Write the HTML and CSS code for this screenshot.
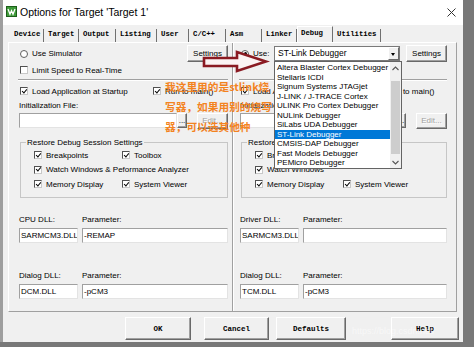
FILE: index.html
```html
<!DOCTYPE html>
<html>
<head>
	<meta charset="UTF-8">
	<title>Options for Target 'Target 1'</title>
	<link rel="stylesheet" href="styles.css">
</head>
<body>
<div class="window">

	<div class="titlebar">
		<svg class="app-icon" width="11" height="11" viewBox="0 0 11 11">
			<rect x="0.5" y="0.5" width="10" height="10" fill="#3f9b3a" stroke="#1d5e1a"/>
			<path d="M2 3 L4 8.2 L5.5 4.6 L7 8.2 L9 3" fill="none" stroke="#fff" stroke-width="1.3"/>
		</svg>
		<span class="title">Options for Target 'Target 1'</span>
		<svg class="close" width="9" height="9" viewBox="0 0 9 9">
			<path d="M0.5 0.5 L8.5 8.5 M8.5 0.5 L0.5 8.5" stroke="#333" stroke-width="1"/>
		</svg>
	</div>

	<div class="tabs">
		<span class="tab">Device</span>
		<span class="tab">Target</span>
		<span class="tab">Output</span>
		<span class="tab">Listing</span>
		<span class="tab">User</span>
		<span class="tab">C/C++</span>
		<span class="tab">Asm</span>
		<span class="tab">Linker</span>
		<span class="tab active">Debug</span>
		<span class="tab">Utilities</span>
	</div>

	<div class="panel">

		<!-- simulator side -->
		<div class="col col-left">
			<div class="row row-top">
				<label class="opt"><span class="radio"></span>Use Simulator</label>
				<button class="btn btn-settings">Settings</button>
			</div>
			<div class="row row-limit">
				<label class="opt"><span class="cb"></span>Limit Speed to Real-Time</label>
			</div>
			<div class="sep"></div>
			<div class="row row-load">
				<label class="opt opt-load"><span class="cb on"></span>Load Application at Startup</label>
				<label class="opt"><span class="cb on"></span>Run to main()</label>
			</div>
			<div class="row caption">Initialization File:</div>
			<div class="row row-init">
				<span class="field"></span>
				<button class="btn btn-dots">...</button>
				<button class="btn btn-edit">Edit...</button>
			</div>
			<fieldset class="group">
				<legend>Restore Debug Session Settings</legend>
				<div class="group-grid">
					<label class="opt"><span class="cb on"></span>Breakpoints</label>
					<label class="opt"><span class="cb on"></span>Toolbox</label>
					<label class="opt wide"><span class="cb on"></span>Watch Windows &amp; Peformance Analyzer</label>
					<label class="opt"><span class="cb on"></span>Memory Display</label>
					<label class="opt"><span class="cb on"></span>System Viewer</label>
				</div>
			</fieldset>
			<div class="dll dll-first">
				<span>CPU DLL:</span><span>Parameter:</span>
				<span class="field">SARMCM3.DLL</span><span class="field">-REMAP</span>
			</div>
			<div class="dll">
				<span>Dialog DLL:</span><span>Parameter:</span>
				<span class="field">DCM.DLL</span><span class="field">-pCM3</span>
			</div>
		</div>

		<!-- target side -->
		<div class="col col-right">
			<div class="row row-top">
				<label class="opt opt-use"><span class="radio on"></span>Use:</label>
				<div class="combo">
					<span class="combo-text">ST-Link Debugger</span>
					<span class="combo-btn"></span>
					<div class="droplist">
						<div class="items">
							<div class="item">Altera Blaster Cortex Debugger</div>
							<div class="item">Stellaris ICDI</div>
							<div class="item">Signum Systems JTAGjet</div>
							<div class="item">J-LINK / J-TRACE Cortex</div>
							<div class="item">ULINK Pro Cortex Debugger</div>
							<div class="item">NULink Debugger</div>
							<div class="item">SiLabs UDA Debugger</div>
							<div class="item sel">ST-Link Debugger</div>
							<div class="item">CMSIS-DAP Debugger</div>
							<div class="item">Fast Models Debugger</div>
							<div class="item">PEMicro Debugger</div>
						</div>
						<div class="scroll">
							<svg class="chev chev-up" width="7" height="5" viewBox="0 0 7 5"><path d="M0.5 4 L3.5 1 L6.5 4" fill="none" stroke="#555" stroke-width="1.1"/></svg>
							<span class="thumb"></span>
							<svg class="chev chev-down" width="7" height="5" viewBox="0 0 7 5"><path d="M0.5 1 L3.5 4 L6.5 1" fill="none" stroke="#555" stroke-width="1.1"/></svg>
						</div>
					</div>
				</div>
				<button class="btn btn-settings">Settings</button>
			</div>
			<div class="row row-limit"></div>
			<div class="sep"></div>
			<div class="row row-load">
				<label class="opt opt-load"><span class="cb on"></span>Load Application at Startup</label>
				<label class="opt"><span class="cb on"></span>Run to main()</label>
			</div>
			<div class="row caption">Initialization File:</div>
			<div class="row row-init">
				<span class="field"></span>
				<button class="btn btn-dots">...</button>
				<button class="btn btn-edit">Edit...</button>
			</div>
			<fieldset class="group">
				<legend>Restore Debug Session Settings</legend>
				<div class="group-grid">
					<label class="opt"><span class="cb on"></span>Breakpoints</label>
					<label class="opt"><span class="cb on"></span>Toolbox</label>
					<label class="opt wide"><span class="cb on"></span>Watch Windows</label>
					<label class="opt"><span class="cb on"></span>Memory Display</label>
					<label class="opt"><span class="cb on"></span>System Viewer</label>
				</div>
			</fieldset>
			<div class="dll dll-first">
				<span>Driver DLL:</span><span>Parameter:</span>
				<span class="field">SARMCM3.DLL</span><span class="field"></span>
			</div>
			<div class="dll">
				<span>Dialog DLL:</span><span>Parameter:</span>
				<span class="field">TCM.DLL</span><span class="field">-pCM3</span>
			</div>
		</div>

		<!-- annotation drawn over the dialog -->
		<svg class="arrow" width="75" height="28" viewBox="0 0 75 28">
			<polygon points="9,10 42,10 42,4 71,13.5 42,23 42,18 9,18" fill="#fbf3f3" stroke="#8a1a22" stroke-width="2.6" stroke-linejoin="miter"/>
		</svg>
		<div class="note">我这里用的是stlink烧<br>写器，如果用别的烧写<br>器，可以选其他种</div>
	</div>

	<div class="buttons">
		<button class="btn btn-ok">OK</button>
		<button class="btn btn-cancel">Cancel</button>
		<button class="btn btn-defaults">Defaults</button>
		<button class="btn btn-help">Help</button>
	</div>

	<div class="watermark">https://blog.csdn.net/</div>
</div>
</body>
</html>
```

FILE: styles.css
```css
html, body {
	margin: 0;
}

body {
	width: 474px;
	height: 347px;
	overflow: hidden;
	background: #787878;
	font-family: "Liberation Sans", Arial, sans-serif;
	font-size: 8px;
	color: #000;
}

.window {
	position: relative;
	width: 460px;
	height: 342px;
	border-left: 3px solid #9e9e9e;
	background: #f0f0f0;
	display: flex;
	flex-direction: column;
}

/* title */
.titlebar {
	height: 25px;
	flex-shrink: 0;
	background: #fff;
	display: flex;
	align-items: center;
	padding: 0 7px 0 3px;
}

.app-icon {
	margin-right: 3px;
	margin-top: -2px;
}

.title {
	font-size: 10.5px;
	margin-top: -1px;
}

.close {
	margin-left: auto;
	margin-top: -1px;
}

/* tabs */
.tabs {
	height: 17px;
	flex-shrink: 0;
	display: grid;
	grid-template-columns: 34px 35px 37px 41px 32px 37px 36px 35px 36px 48px;
	align-items: end;
	padding-left: 7px;
	font-family: "Liberation Mono", "Courier New", monospace;
	font-weight: bold;
	font-size: 7.3px;
}

.tab {
	box-sizing: border-box;
	height: 13px;
	line-height: 11px;
	padding-left: 4px;
	border-right: 1px solid #707070;
	white-space: nowrap;
}

.tab.active {
	height: 16px;
	line-height: 12px;
	padding-left: 3px;
	border-top: 1px solid #fff;
	border-left: 1px solid #fff;
}

/* page */
.panel {
	position: relative;
	height: 270px;
	box-sizing: border-box;
	margin: 0 6px 0 5px;
	border: 1px solid;
	border-color: #fff #a0a0a0 #a0a0a0 #fff;
	display: grid;
	grid-template-columns: 224px 1fr;
}

.col-left {
	padding: 2px 4px 0 10px;
	border-right: 1px solid #a0a0a0;
}

.col-right {
	padding: 2px 9px 0 6px;
	border-left: 1px solid #fff;
}

.row {
	display: flex;
	align-items: center;
	height: 10px;
	white-space: nowrap;
}

.row-top {
	height: 17px;
}

.row-limit {
	margin-top: 3px;
}

.sep {
	margin: 4px 0 0 -1px;
	border-top: 1px solid #a0a0a0;
	border-bottom: 1px solid #fff;
}

.row-load {
	margin-top: 5px;
}

.caption {
	margin-top: 4px;
}

.row-init {
	margin-top: 3px;
	height: 15px;
}

/* check boxes and radios */
.opt {
	display: flex;
	align-items: center;
	gap: 4px;
	padding-left: 1px;
	height: 10px;
	white-space: nowrap;
}

.opt-load {
	width: 132px;
	flex-shrink: 0;
}

.opt-use {
	width: 33px;
	flex-shrink: 0;
}

.cb {
	position: relative;
	box-sizing: border-box;
	width: 8px;
	height: 8px;
	flex-shrink: 0;
	background: #fff;
	border: 1px solid;
	border-color: #505050 #c8c8c8 #c8c8c8 #505050;
}

.cb.on::after {
	content: '';
	position: absolute;
	left: 1.5px;
	top: -0.5px;
	width: 1.5px;
	height: 4px;
	border: solid #000;
	border-width: 0 1.6px 1.6px 0;
	transform: rotate(40deg);
}

.radio {
	position: relative;
	box-sizing: border-box;
	width: 8px;
	height: 8px;
	flex-shrink: 0;
	border-radius: 50%;
	background: #fff;
	border: 1px solid #606060;
}

.radio.on::after {
	content: '';
	position: absolute;
	left: 1.5px;
	top: 1.5px;
	width: 3px;
	height: 3px;
	border-radius: 50%;
	background: #000;
}

/* inputs */
.field {
	box-sizing: border-box;
	height: 15px;
	background: #fff;
	border: 1px solid;
	border-color: #a0a0a0 #e3e3e3 #e3e3e3 #a0a0a0;
	padding-left: 1px;
	line-height: 13px;
	white-space: nowrap;
	overflow: hidden;
}

.btn {
	box-sizing: border-box;
	height: 17px;
	padding: 0;
	font: inherit;
	color: #000;
	background: #f0f0f0;
	border: 1px solid;
	border-color: #fff #696969 #696969 #fff;
	box-shadow: inset -1px -1px #a0a0a0;
}

.btn-settings {
	width: 41px;
	margin-left: auto;
}

.row-init .field {
	flex: 1;
}

.btn-dots {
	width: 10px;
	height: 15px;
	line-height: 8px;
}

.btn-edit {
	width: 31px;
	height: 16px;
	margin-left: 10px;
	color: #a0a0a0;
	text-shadow: 1px 1px #fff;
}

/* group box */
.group {
	margin: 10px 0 0 1px;
	padding: 0;
	min-width: 0;
	border: 1px solid #c6c6c6;
}

.group legend {
	margin-left: 5px;
	padding: 0 1px;
	line-height: 9px;
}

.group-grid {
	display: grid;
	grid-template-columns: 88px 1fr;
	row-gap: 4.5px;
	padding: 3px 0 8px 12px;
}

.group-grid .wide {
	grid-column: 1 / -1;
}

/* dll rows */
.dll {
	display: grid;
	grid-template-columns: 59px 1fr;
	grid-template-rows: 10px 15px;
	column-gap: 4px;
	row-gap: 3px;
	line-height: 10px;
	white-space: nowrap;
}

.dll-first {
	margin-top: 17px;
}

.dll + .dll {
	margin-top: 28px;
}

.dll .field {
	line-height: 13px;
}

/* debugger combo */
.combo {
	position: relative;
	box-sizing: border-box;
	width: 126px;
	height: 15px;
	display: flex;
	background: #fff;
	border: 1px solid #7a7a7a;
}

.combo-text {
	flex: 1;
	padding-left: 3px;
	line-height: 13px;
	font-size: 8.5px;
}

.combo-btn {
	position: relative;
	box-sizing: border-box;
	width: 11px;
	background: #f0f0f0;
	border: 1px solid;
	border-color: #fff #696969 #696969 #fff;
}

.combo-btn::after {
	content: '';
	position: absolute;
	left: 2px;
	top: 5px;
	border-left: 2.5px solid transparent;
	border-right: 2.5px solid transparent;
	border-top: 3px solid #000;
}

.droplist {
	position: absolute;
	left: -1px;
	top: 14px;
	width: 128px;
	box-sizing: border-box;
	display: flex;
	background: #fff;
	border: 1px solid #646464;
	z-index: 3;
}

.items {
	flex: 1;
	padding-top: 1px;
}

.item {
	height: 9.5px;
	line-height: 9.5px;
	padding-left: 2px;
	white-space: nowrap;
	overflow: hidden;
}

.item.sel {
	background: #0078d7;
	color: #fff;
}

.scroll {
	position: relative;
	width: 11px;
	background: #f0f0f0;
}

.chev {
	position: absolute;
	left: 2px;
}

.chev-up {
	top: 4px;
}

.chev-down {
	bottom: 3px;
}

.thumb {
	position: absolute;
	left: 1px;
	right: 1px;
	top: 19px;
	height: 73px;
	background: #cdcdcd;
}

/* annotation */
.arrow {
	position: absolute;
	left: 186px;
	top: 5px;
	z-index: 2;
}

.note {
	position: absolute;
	left: 156px;
	top: 34px;
	z-index: 2;
	font-family: "Noto Sans CJK SC", sans-serif;
	font-weight: bold;
	font-size: 10.7px;
	line-height: 20px;
	color: #f3831f;
	white-space: nowrap;
}

/* dialog buttons */
.buttons {
	display: flex;
	padding: 5px 4px 0 122px;
	font-family: "Liberation Mono", "Courier New", monospace;
	font-weight: bold;
	font-size: 7.5px;
}

.buttons .btn {
	height: 23px;
}

.btn-ok {
	width: 66px;
}

.btn-cancel {
	width: 65px;
	margin-left: 13px;
}

.btn-defaults {
	width: 70px;
	margin-left: 7px;
}

.btn-help {
	width: 68px;
	margin-left: auto;
}

.watermark {
	position: absolute;
	left: 349px;
	top: 326px;
	font-size: 9px;
	color: rgba(255, 255, 255, 0.5);
}
```
